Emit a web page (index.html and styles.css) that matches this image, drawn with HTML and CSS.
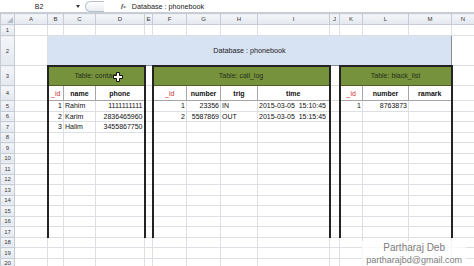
FILE: index.html
```html
<!DOCTYPE html>
<html lang="en">
<head>
    <meta charset="UTF-8">
    <meta name="viewport" content="width=device-width, initial-scale=1.0">
    <title>phonebook.xlsx</title>
    <link rel="stylesheet" href="styles.css">
</head>
<body>

    <div id="formulaBar">
        <div class="name-box">B2</div>
        <span class="drop-arrow"></span>
        <span class="splitter"></span>
        <span class="fx">f<i>x</i></span>
        <div class="formula">Database : phonebook</div>
    </div>

    <table id="sheet">
        <colgroup>
            <col style="width:14px">
            <col style="width:33px">
            <col style="width:16px">
            <col style="width:32px">
            <col style="width:49px">
            <col style="width:8px">
            <col style="width:34px">
            <col style="width:34px">
            <col style="width:37px">
            <col style="width:72px">
            <col style="width:10px">
            <col style="width:23px">
            <col style="width:46px">
            <col style="width:43px">
            <col style="width:23px">
        </colgroup>
        <tr class="col-hdr">
            <th class="corner"></th>
            <th>A</th>
            <th class="sel">B</th>
            <th class="sel">C</th>
            <th class="sel">D</th>
            <th class="sel">E</th>
            <th class="sel">F</th>
            <th class="sel">G</th>
            <th class="sel">H</th>
            <th class="sel">I</th>
            <th class="sel">J</th>
            <th class="sel">K</th>
            <th class="sel">L</th>
            <th class="sel">M</th>
            <th>N</th>
        </tr>
        <tr class="r1">
            <th class="row-hdr">1</th>
            <td></td><td></td><td></td><td></td><td></td><td></td><td></td>
            <td></td><td></td><td></td><td></td><td></td><td></td><td></td>
        </tr>
        <tr class="r2">
            <th class="row-hdr sel">2</th>
            <td></td>
            <td colspan="12" class="db-title">Database : phonebook</td>
            <td></td>
        </tr>
        <tr class="r3">
            <th class="row-hdr">3</th>
            <td></td>
            <td colspan="3" class="tbl-name">
                Table: contact
                <svg class="cursor" width="10" height="10" viewBox="0 0 10 10">
                    <path d="M3.5 0.5h3v3h3v3h-3v3h-3v-3h-3v-3h3z" fill="#fff" stroke="#111" stroke-width="1"/>
                </svg>
            </td>
            <td></td>
            <td colspan="4" class="tbl-name">Table: call_log</td>
            <td></td>
            <td colspan="3" class="tbl-name">Table: black_list</td>
            <td></td>
        </tr>
        <tr class="r4">
            <th class="row-hdr">4</th>
            <td></td>
            <td class="fh lb key">_id</td>
            <td class="fh">name</td>
            <td class="fh rb">phone</td>
            <td></td>
            <td class="fh lb key">_id</td>
            <td class="fh">number</td>
            <td class="fh">trig</td>
            <td class="fh rb">time</td>
            <td></td>
            <td class="fh lb key">_id</td>
            <td class="fh">number</td>
            <td class="fh rb">ramark</td>
            <td></td>
        </tr>
        <tr class="row">
            <th class="row-hdr">5</th>
            <td></td>
            <td class="lb num">1</td>
            <td>Rahim</td>
            <td class="rb num clip">1111111111</td>
            <td></td>
            <td class="lb num">1</td>
            <td class="num">23356</td>
            <td>IN</td>
            <td class="rb">2015-03-05&nbsp; 15:10:45</td>
            <td></td>
            <td class="lb num">1</td>
            <td class="num">8763873</td>
            <td class="rb"></td>
            <td></td>
        </tr>
        <tr class="row">
            <th class="row-hdr">6</th>
            <td></td>
            <td class="lb num">2</td>
            <td>Karim</td>
            <td class="rb num clip">2836465960</td>
            <td></td>
            <td class="lb num">2</td>
            <td class="num">5587869</td>
            <td>OUT</td>
            <td class="rb">2015-03-05&nbsp; 15:15:45</td>
            <td></td>
            <td class="lb"></td>
            <td></td>
            <td class="rb"></td>
            <td></td>
        </tr>
        <tr class="row">
            <th class="row-hdr">7</th>
            <td></td>
            <td class="lb num">3</td>
            <td>Halim</td>
            <td class="rb num clip">3455867750</td>
            <td></td>
            <td class="lb"></td>
            <td></td>
            <td></td>
            <td class="rb"></td>
            <td></td>
            <td class="lb"></td>
            <td></td>
            <td class="rb"></td>
            <td></td>
        </tr>
        <tbody id="blankRows"></tbody>
    </table>

    <div class="credit">
        <div class="credit-name">Partharaj Deb</div>
        <div class="credit-mail">partharajbd@gmail.com</div>
    </div>

    <script src="./sheet.js"></script>
</body>
</html>
```

FILE: styles.css
```css
body {
    margin: 0;
    font-family: "Liberation Sans", Arial, sans-serif;
    background-color: #fff;
    overflow: hidden;
    position: relative;
    width: 474px;
    height: 266px;
}
#formulaBar {
    display: flex;
    align-items: center;
    height: 12px;
    border-bottom: 1px solid #c9ced6;
    font-size: 7px;
    color: #222;
}
.name-box {
    width: 78px;
    text-align: center;
}
.drop-arrow {
    width: 0;
    height: 0;
    border-left: 2px solid transparent;
    border-right: 2px solid transparent;
    border-top: 3px solid #333;
    margin-left: -2px;
}
.splitter {
    width: 18px;
    height: 9px;
    margin-left: 5px;
    border: 1px solid #b8c0cc;
    border-right: none;
    border-radius: 6px 0 0 6px;
    background: linear-gradient(#fdfdfd, #e9edf2);
}
.fx {
    margin-left: 17px;
    font-family: "Liberation Serif", serif;
    font-style: italic;
    font-weight: bold;
    font-size: 7px;
    color: #444;
}
.fx i {
    font-size: 5px;
}
.formula {
    margin-left: 6px;
    font-size: 7.2px;
}
#sheet {
    table-layout: fixed;
    border-collapse: collapse;
    width: 474px;
    font-size: 7px;
    color: #111;
}
#sheet td {
    border: 1px solid #dcdfe3;
    padding: 0 1px;
    white-space: nowrap;
    overflow: hidden;
    line-height: 1;
}
#sheet th {
    font-weight: normal;
    padding: 0;
    border: 1px solid #c6ccd6;
    background: linear-gradient(#f4f6f9, #e3e8ef);
    color: #3a3a3a;
    font-size: 6px;
}
.col-hdr {
    height: 11px;
}
.col-hdr th.sel {
    background: linear-gradient(#fbe2b3, #f4c46c);
    border-color: #e3b05c;
    color: #6a4a1a;
}
.corner {
    position: relative;
}
.corner::after {
    content: "";
    position: absolute;
    right: 1px;
    bottom: 1px;
    border-left: 6px solid transparent;
    border-bottom: 6px solid #b4bcc8;
}
.row-hdr.sel {
    background: linear-gradient(#fbe2b3, #f4c46c);
    border-color: #e3b05c;
}
.r1 {
    height: 11px;
}
.r2 {
    height: 30px;
}
.r3 {
    height: 20px;
}
.r4 {
    height: 15px;
}
.row {
    height: 10.5px;
}
#sheet .db-title {
    background-color: #d7e2f2;
    border: 1px solid #8a8f96;
    text-align: center;
    font-size: 7.2px;
    color: #1c1c1c;
}
#sheet .tbl-name {
    position: relative;
    background-color: #76923c;
    border: 2px solid #232323;
    border-bottom: 1px solid #4d5e2a;
    text-align: center;
    color: #26301a;
    overflow: visible;
}
.cursor {
    position: absolute;
    left: 64px;
    top: 5px;
}
#sheet .fh {
    text-align: center;
    font-weight: bold;
    border: 1px solid #a6a6a6;
    color: #111;
}
#sheet .key {
    color: #d0302f;
    font-weight: normal;
}
#sheet .lb {
    border-left: 2px solid #232323;
}
#sheet .rb {
    border-right: 2px solid #232323;
}
.num {
    text-align: right;
}
#sheet .clip {
    text-overflow: clip;
    text-align: right;
    direction: rtl;
}
.credit {
    position: absolute;
    right: 8px;
    bottom: 0;
    padding: 1px 4px 0;
    text-align: center;
    background: rgba(255, 255, 255, 0.75);
    color: #7c7c7c;
    line-height: 1.25;
}
.credit-name {
    font-size: 10px;
}
.credit-mail {
    font-size: 9px;
}
```

FILE: sheet.js
```js
// empty rows 8 - 20, tables keep their side borders down to row 17
var body = document.getElementById('blankRows');
var framed = { 2: 'lb', 4: 'rb', 6: 'lb', 9: 'rb', 11: 'lb', 13: 'rb' };

for (var r = 8; r <= 20; r++) {
    var tr = document.createElement('tr');
    tr.className = 'row';
    var th = document.createElement('th');
    th.className = 'row-hdr';
    th.textContent = r;
    tr.appendChild(th);
    for (var c = 1; c <= 14; c++) {
        var td = document.createElement('td');
        if (r <= 17 && framed[c]) {
            td.className = framed[c];
        }
        tr.appendChild(td);
    }
    body.appendChild(tr);
}
```
